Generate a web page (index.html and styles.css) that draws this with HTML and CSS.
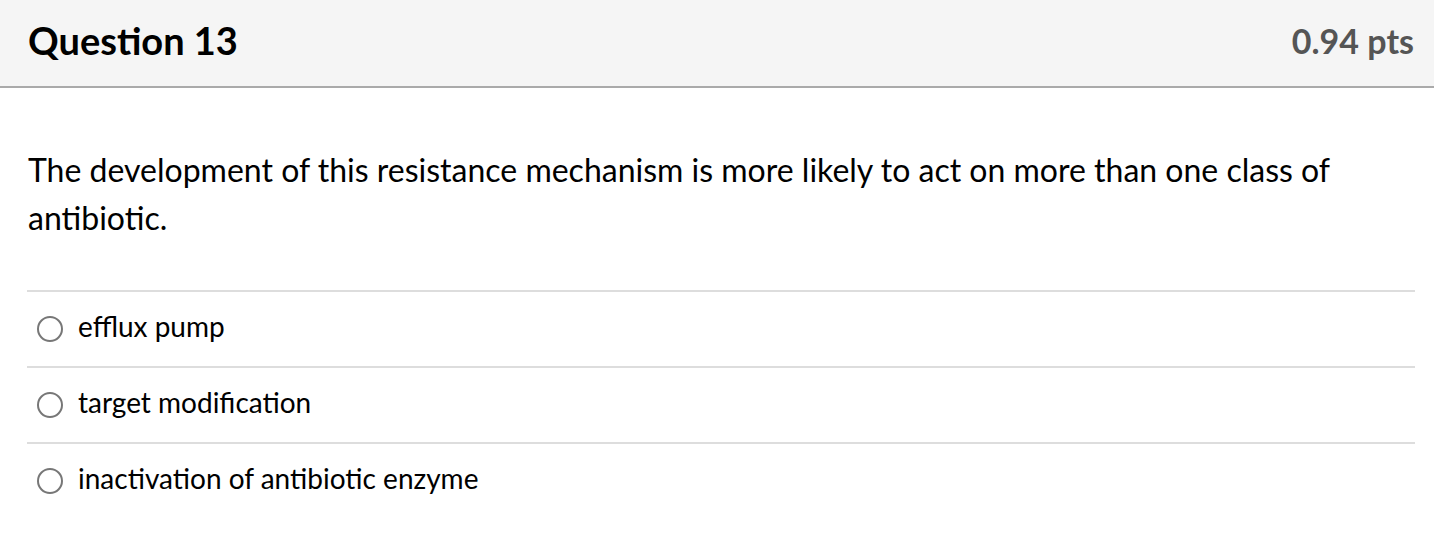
FILE: index.html
```html
<!DOCTYPE html>
<html>
<head>
<meta charset="utf-8">
<link rel="stylesheet" href="styles.css">
</head>
<body>
<div class="question">
  <div class="header">
    <h2 class="title">Question 13</h2>
    <span class="points">0.94 pts</span>
  </div>
  <div class="content">
    <p class="text">The development of this resistance mechanism is more likely to act on more than one class of antibiotic.</p>
    <div class="answers">
      <label class="answer"><span class="radio"></span><span class="label">efflux pump</span></label>
      <label class="answer"><span class="radio"></span><span class="label">target modification</span></label>
      <label class="answer"><span class="radio"></span><span class="label">inactivation of antibiotic enzyme</span></label>
    </div>
  </div>
</div>
</body>
</html>
```
FILE: styles.css
```css
html, body {
  margin: 0;
  padding: 0;
  background: #fff;
}
body {
  font-family: Lato, "Liberation Sans", sans-serif;
  color: #000;
}
.header {
  height: 80px;
  background: #f5f5f5;
  border-bottom: 2px solid #aaaaaa;
  display: flex;
  align-items: center;
  justify-content: space-between;
  padding: 0 20px 6px 28px;
}
.title {
  margin: 0;
  font-size: 38px;
  font-weight: 700;
  color: #000;
}
.points {
  font-size: 34px;
  font-weight: 700;
  color: #555;
}
.content {
  padding: 0 19px 0 27px;
}
.text {
  margin: 0;
  padding: 58px 0 0 1px;
  font-size: 32px;
  line-height: 48px;
}
.answers {
  margin-top: 48px;
}
.answer {
  display: flex;
  align-items: center;
  height: 74px;
  border-top: 2px solid #dddddd;
}
.radio {
  width: 22px;
  height: 22px;
  border: 2px solid #777;
  border-radius: 50%;
  margin-left: 10px;
  margin-right: 15px;
  flex-shrink: 0;
}
.label {
  font-size: 28px;
  margin-bottom: 6px;
}
```
